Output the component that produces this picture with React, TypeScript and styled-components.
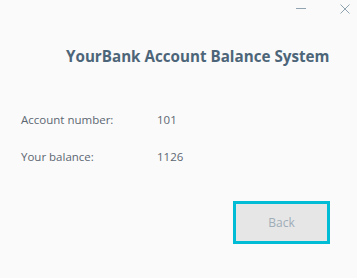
import React from "react";
import styled, { createGlobalStyle } from "styled-components";

const GlobalStyle = createGlobalStyle`
  html, body {
    margin: 0;
    padding: 0;
    background: #fafafa;
  }
  body {
    font-family: "Open Sans", "Noto Sans", "Liberation Sans", sans-serif;
  }
`;

const Window = styled.div`
  width: 357px;
  height: 278px;
  box-sizing: border-box;
  background: #fafafa;
  display: flex;
  flex-direction: column;
`;

const TitleBar = styled.div`
  height: 18px;
  box-sizing: border-box;
  display: flex;
  justify-content: flex-end;
  align-items: flex-start;
  gap: 34px;
  padding: 4px 7px 0 0;
`;

const WindowButton = styled.button`
  width: 10px;
  height: 10px;
  padding: 0;
  border: none;
  background: transparent;
  display: flex;
  align-items: center;
  justify-content: center;
  color: #8fa3b1;
  cursor: pointer;
`;

const Heading = styled.h1`
  margin: 28px 0 0 66px;
  font-size: 15.2px;
  font-weight: 700;
  color: #4d6578;
  line-height: 20px;
`;

const Details = styled.div`
  display: grid;
  grid-template-columns: 136px auto;
  row-gap: 19px;
  margin: 45px 0 0 21px;
  font-size: 11.5px;
  color: #5c6772;
  line-height: 18px;
`;

const Footer = styled.div`
  display: flex;
  justify-content: flex-end;
  padding-right: 27px;
  margin-top: 35px;
`;

const BackButton = styled.button`
  width: 97px;
  height: 43px;
  box-sizing: border-box;
  border: 3px solid #00bcd4;
  background: #e6e6e6;
  color: #9eadb8;
  font-family: inherit;
  font-size: 12px;
  cursor: pointer;
`;

export default function App() {
  return (
    <Window>
      <GlobalStyle />
      <TitleBar>
        <WindowButton aria-label="minimize">
          <svg width="10" height="10" viewBox="0 0 10 10">
            <line x1="0" y1="4.5" x2="10" y2="4.5" stroke="currentColor" strokeWidth="1" />
          </svg>
        </WindowButton>
        <WindowButton aria-label="close">
          <svg width="10" height="10" viewBox="0 0 10 10">
            <path d="M0.5 0.5 L9.5 9.5 M9.5 0.5 L0.5 9.5" stroke="currentColor" strokeWidth="1" />
          </svg>
        </WindowButton>
      </TitleBar>
      <Heading>YourBank Account Balance System</Heading>
      <Details>
        <span>Account number:</span>
        <span>101</span>
        <span>Your balance:</span>
        <span>1126</span>
      </Details>
      <Footer>
        <BackButton>Back</BackButton>
      </Footer>
    </Window>
  );
}
